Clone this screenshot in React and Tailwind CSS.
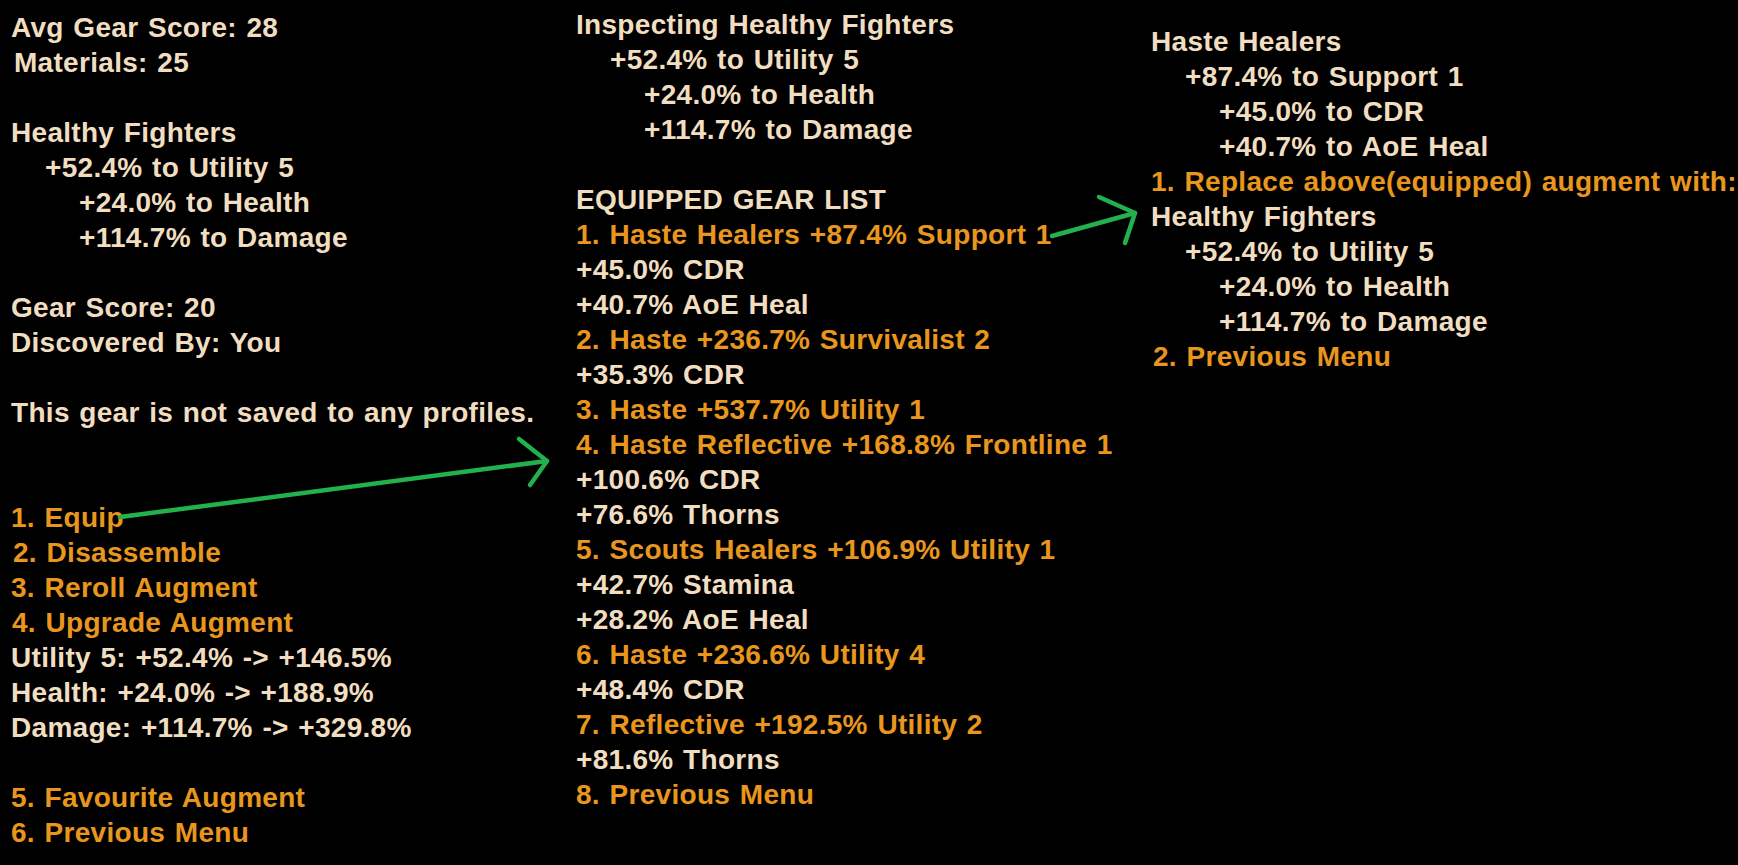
import React from 'react';

// c = cream text, o = orange menu option, '' = empty line
const left = [
  ['c', 'Avg Gear Score: 28'],
  ['c', 'Materials: 25', 'ml-[3px]'],
  [''],
  ['c', 'Healthy Fighters'],
  ['c', '+52.4% to Utility 5', 'pl-[34px]'],
  ['c', '+24.0% to Health', 'pl-[68px]'],
  ['c', '+114.7% to Damage', 'pl-[68px]'],
  [''],
  ['c', 'Gear Score: 20'],
  ['c', 'Discovered By: You'],
  [''],
  ['c', 'This gear is not saved to any profiles.'],
  [''],
  [''],
  ['o', '1. Equip'],
  ['o', '2. Disassemble', 'ml-[2px]'],
  ['o', '3. Reroll Augment'],
  ['o', '4. Upgrade Augment', 'ml-[1px]'],
  ['c', 'Utility 5: +52.4% -> +146.5%'],
  ['c', 'Health: +24.0% -> +188.9%'],
  ['c', 'Damage: +114.7% -> +329.8%'],
  [''],
  ['o', '5. Favourite Augment'],
  ['o', '6. Previous Menu'],
];

const middle = [
  ['c', 'Inspecting Healthy Fighters'],
  ['c', '+52.4% to Utility 5', 'pl-[34px]'],
  ['c', '+24.0% to Health', 'pl-[68px]'],
  ['c', '+114.7% to Damage', 'pl-[68px]'],
  [''],
  ['c', 'EQUIPPED GEAR LIST'],
  ['o', '1. Haste Healers +87.4% Support 1'],
  ['c', '+45.0% CDR'],
  ['c', '+40.7% AoE Heal'],
  ['o', '2. Haste +236.7% Survivalist 2'],
  ['c', '+35.3% CDR'],
  ['o', '3. Haste +537.7% Utility 1'],
  ['o', '4. Haste Reflective +168.8% Frontline 1'],
  ['c', '+100.6% CDR'],
  ['c', '+76.6% Thorns'],
  ['o', '5. Scouts Healers +106.9% Utility 1'],
  ['c', '+42.7% Stamina'],
  ['c', '+28.2% AoE Heal'],
  ['o', '6. Haste +236.6% Utility 4'],
  ['c', '+48.4% CDR'],
  ['o', '7. Reflective +192.5% Utility 2'],
  ['c', '+81.6% Thorns'],
  ['o', '8. Previous Menu'],
];

const right = [
  ['c', 'Haste Healers'],
  ['c', '+87.4% to Support 1', 'pl-[34px]'],
  ['c', '+45.0% to CDR', 'pl-[68px]'],
  ['c', '+40.7% to AoE Heal', 'pl-[68px]'],
  ['o', '1. Replace above(equipped) augment with:'],
  ['c', 'Healthy Fighters'],
  ['c', '+52.4% to Utility 5', 'pl-[34px]'],
  ['c', '+24.0% to Health', 'pl-[68px]'],
  ['c', '+114.7% to Damage', 'pl-[68px]'],
  ['o', '2. Previous Menu', 'ml-[2px]'],
];

const Line = ({ kind, text, extra = '' }) => {
  if (!kind) return <div className="h-[35px]" />;
  const color = kind === 'o' ? 'text-[#e8961e]' : 'text-[#f1dec1]';
  return <div className={`h-[35px] whitespace-nowrap ${color} ${extra}`}>{text}</div>;
};

const Column = ({ lines, className }) => (
  <div className={className}>
    {lines.map((l, i) => (
      <Line key={i} kind={l[0]} text={l[1]} extra={l[2]} />
    ))}
  </div>
);

export default function App() {
  return (
    <div className="relative w-[1738px] h-[865px] overflow-hidden bg-black font-['Liberation_Sans',Arial,sans-serif] font-bold text-[28px] leading-[35px] tracking-[0.3px] [word-spacing:1.5px]">
      <div className="flex">
        <Column lines={left} className="w-[576px] pl-[11px] pt-[10px] shrink-0" />
        <Column lines={middle} className="w-[575px] pt-[7px] shrink-0" />
        <Column lines={right} className="flex-1 pt-[24px]" />
      </div>

      {/* green annotation arrows */}
      <svg className="absolute inset-0 pointer-events-none" width="1738" height="865" viewBox="0 0 1738 865">
        <g stroke="#22b14c" strokeWidth="4.5" strokeLinecap="round" strokeLinejoin="round" fill="none">
          <path d="M120 517 L547 461" />
          <path d="M519 439 L547 461 L530 485" />
          <path d="M1052 236 L1135 213" />
          <path d="M1099 197 L1135 213 L1125 243" />
        </g>
      </svg>
    </div>
  );
}
